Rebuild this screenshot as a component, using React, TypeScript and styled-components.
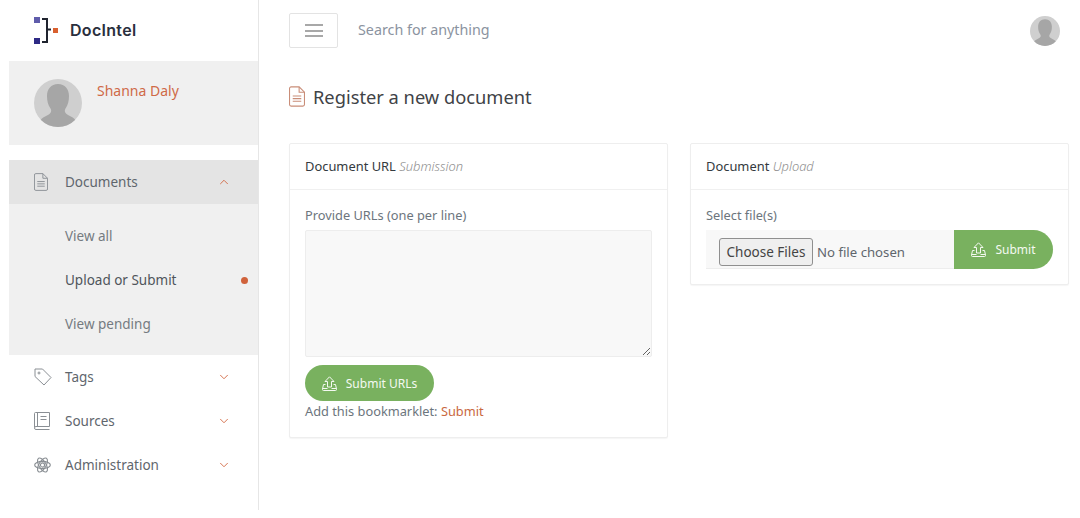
import styled, { createGlobalStyle } from 'styled-components';
import { ChevronDown, ChevronUp } from 'lucide-react';

const GlobalStyle = createGlobalStyle`
  html, body {
    margin: 0;
    background: #fff;
  }
  * {
    box-sizing: border-box;
  }
  body {
    font-family: "Noto Sans", "Open Sans", sans-serif;
    font-size: 13.5px;
    color: #6c757d;
    overflow: hidden;
  }
`;

const Page = styled.div`
  display: flex;
  width: 1080px;
  height: 518px;
`;

const Sidebar = styled.aside`
  width: 259px;
  height: 510px;
  padding-left: 9px;
  border-right: 1px solid #e6e6e6;
  flex-shrink: 0;
`;

const Brand = styled.div`
  display: flex;
  align-items: center;
  height: 61px;
  padding-left: 25px;
  gap: 12px;
`;

const BrandName = styled.span`
  margin-top: -2px;
  font-family: Inter, sans-serif;
  font-size: 16px;
  font-weight: 600;
  color: #2a2f3d;
  letter-spacing: 0.3px;
`;

const Profile = styled.div`
  display: flex;
  height: 84px;
  margin-bottom: 15px;
  padding: 18px 0 0 25px;
  gap: 15px;
  background: #f0f0f0;
`;

const ProfileName = styled.a`
  color: #cf6a47;
  font-size: 14px;
  line-height: 24px;
`;

const MenuRow = styled.div<{ $open?: boolean }>`
  display: flex;
  align-items: center;
  height: 44px;
  padding: 0 27px 0 25px;
  background: ${(p) => (p.$open ? '#e4e4e4' : 'transparent')};
  color: #5f666d;
`;

const MenuIcon = styled.span`
  display: flex;
  width: 31px;
  color: #8a8f94;
`;

const MenuLabel = styled.span`
  flex: 1;
  line-height: 20px;
`;

const SubMenu = styled.div`
  background: #f0f0f0;
  padding: 10px 0 9px;
`;

const SubItem = styled.div<{ $active?: boolean }>`
  display: flex;
  align-items: center;
  justify-content: space-between;
  height: 44px;
  padding: 0 10px 0 56px;
  color: ${(p) => (p.$active ? '#4f555b' : '#757b81')};
`;

const Dot = styled.span`
  width: 7px;
  height: 7px;
  border-radius: 50%;
  background: #d0623b;
`;

const Main = styled.main`
  flex: 1;
  min-width: 0;
  padding: 0 11px 0 30px;
`;

const Topbar = styled.div`
  display: flex;
  align-items: center;
  height: 61px;
`;

const MenuButton = styled.button`
  display: flex;
  flex-direction: column;
  align-items: center;
  justify-content: center;
  gap: 3.5px;
  width: 49px;
  height: 35px;
  margin-right: 20px;
  padding: 0;
  background: #fff;
  border: 1px solid #e3e3e3;
  border-radius: 2px;
`;

const MenuBar = styled.span`
  width: 18px;
  height: 2px;
  background: #a8a8a8;
`;

const SearchText = styled.span`
  flex: 1;
  margin-top: -3px;
  color: #8b93a0;
  font-size: 14.3px;
`;

const TopAvatar = styled.span`
  display: flex;
  margin-right: 9px;
`;

const Heading = styled.div`
  display: flex;
  align-items: center;
  gap: 8px;
  height: 36px;
  margin: 17px 0 29px;
`;

const Title = styled.h1`
  margin: 0;
  font-size: 18.3px;
  font-weight: 400;
  color: #3f4347;
`;

const Columns = styled.div`
  display: flex;
  align-items: flex-start;
  gap: 22px;
`;

const Card = styled.section<{ $width: number }>`
  width: ${(p) => p.$width}px;
  background: #fff;
  border: 1px solid #eeeeee;
  border-radius: 2px;
  box-shadow: 0 1px 1px rgba(0, 0, 0, 0.04);
`;

const CardHead = styled.div`
  height: 46px;
  padding: 0 15px;
  line-height: 45px;
  font-size: 12.9px;
  color: #343a40;
  border-bottom: 1px solid #f0f0f0;
`;

const Muted = styled.em`
  color: #8f8f8f;
  font-weight: 300;
`;

const CardBody = styled.div`
  padding: 15px 15px 0;
`;

const FieldLabel = styled.label`
  display: block;
  height: 25px;
  line-height: 20px;
  font-size: 12.8px;
  color: #6c757d;
`;

const UrlInput = styled.textarea`
  display: block;
  width: 100%;
  height: 127px;
  margin-bottom: 8px;
  background: #f8f8f8;
  border: 1px solid #ededed;
  border-radius: 2px;
`;

const PillButton = styled.button`
  display: flex;
  align-items: center;
  justify-content: center;
  gap: 9px;
  width: 129px;
  height: 36px;
  padding: 0;
  border: none;
  border-radius: 18px;
  background: #79b15f;
  color: #f4f9f1;
  font-family: inherit;
  font-size: 12px;
`;

const Hint = styled.div`
  height: 36px;
  line-height: 20px;
  font-size: 12.8px;
  color: #6c757d;
`;

const HintLink = styled.a`
  color: #c9683f;
`;

const FileRow = styled.div`
  display: flex;
  height: 39px;
  margin-bottom: 15px;
`;

const FileField = styled.div`
  display: flex;
  align-items: center;
  flex: 1;
  padding: 5px 0 0 13px;
  background: #f8f8f8;
  border-bottom: 1px solid #ededed;
  font-size: 13.2px;
  color: #5f666d;
  gap: 4px;
`;

const ChooseButton = styled.button`
  width: 94px;
  height: 28px;
  padding: 0;
  background: #efefef;
  border: 1px solid #8f8f8f;
  border-radius: 3px;
  font-family: inherit;
  font-size: 13.5px;
  color: #444;
`;

const FileSubmit = styled(PillButton)`
  width: 99px;
  height: 39px;
  border-radius: 0 20px 20px 0;
`;

const Avatar = ({ size }: { size: number }) => (
  <svg width={size} height={size} viewBox="0 0 48 48">
    <defs>
      <clipPath id={`avatar-${size}`}>
        <circle cx="24" cy="24" r="24" />
      </clipPath>
    </defs>
    <circle cx="24" cy="24" r="24" fill="#cfcfcf" />
    <path
      clipPath={`url(#avatar-${size})`}
      d="M24 5c-7 0-11 5-11 12 0 5 1 9 3.500 12.500 1 1.500 1 3.500-.5 5C13 37 8 38 6 42l2 6h32l2-6c-2-4-7-5-10-7.500-1.500-1.500-1.500-3.500-.5-5C34 26 35 22 35 17c0-7-4-12-11-12z"
      fill="#a6a6a6"
    />
  </svg>
);

const Logo = () => (
  <svg width="24" height="27" viewBox="0 0 24 27">
    <rect x="0" y="0" width="6" height="6" fill="#5f5cab" />
    <rect x="0" y="21" width="6" height="6" fill="#2e2a85" />
    <path d="M8 2h5v23H8" fill="none" stroke="#20242f" strokeWidth="2" />
    <path d="M14 12.500h3" fill="none" stroke="#20242f" strokeWidth="2" />
    <rect x="19" y="11" width="5" height="5" fill="#d9602f" />
  </svg>
);

const DocIcon = ({ color = 'currentColor', width = 14, height = 18 }: { color?: string; width?: number; height?: number }) => (
  <svg width={width} height={height} viewBox="0 0 15 19" fill="none" stroke={color} strokeWidth="1">
    <path d="M2 .5h7.500L14.500 5.500V17a1.500 1.500 0 0 1-1.500 1.500H2A1.500 1.500 0 0 1 .5 17V2A1.500 1.500 0 0 1 2 .5z" />
    <path d="M9.500.5v5h5M3.500 9h8M3.500 11.500h8M3.500 14h8" />
  </svg>
);

const TagIcon = () => (
  <svg width="18" height="19" viewBox="0 0 18 19" fill="none" stroke="currentColor" strokeWidth="1">
    <path d="M1 1h7.500l8.500 8.500-7 7.500L1 8.500z" strokeLinejoin="round" />
    <circle cx="5" cy="5" r="1" />
  </svg>
);

const BookIcon = () => (
  <svg width="16" height="18" viewBox="0 0 16 18" fill="none" stroke="currentColor" strokeWidth="1">
    <path d="M.5 15V1.500a1 1 0 0 1 1-1h14v14H2a1.500 1.500 0 0 0 0 3h13.500" />
    <path d="M3.500.5v14M6.500 4.500h6M6.500 7.500h6" />
  </svg>
);

const AtomIcon = () => (
  <svg width="17" height="18" viewBox="0 0 18 18" fill="none" stroke="currentColor" strokeWidth="1.200">
    <ellipse cx="9" cy="9" rx="8.300" ry="3.800" />
    <ellipse cx="9" cy="9" rx="8.300" ry="3.800" transform="rotate(60 9 9)" />
    <ellipse cx="9" cy="9" rx="8.300" ry="3.800" transform="rotate(120 9 9)" />
    <circle cx="9" cy="9" r="2.200" />
  </svg>
);

const UploadIcon = () => (
  <svg width="15" height="15" viewBox="0 0 15 15" fill="none" stroke="currentColor" strokeWidth="1">
    <path d="M7.500.8 3 5.500h2.500v5.500h4V5.500H12z" strokeLinejoin="round" />
    <path d="M3.500 8.500h-2l-1 4.500v.500a1 1 0 0 0 1 1h12a1 1 0 0 0 1-1V13l-1-4.500h-2M.8 12.500h4.700M9.500 12.500h4.700" />
  </svg>
);

const App = () => (
  <Page>
    <GlobalStyle />
    <Sidebar>
      <Brand>
        <Logo />
        <BrandName>DocIntel</BrandName>
      </Brand>
      <Profile>
        <Avatar size={48} />
        <ProfileName>Shanna Daly</ProfileName>
      </Profile>
      <MenuRow $open>
        <MenuIcon>
          <DocIcon />
        </MenuIcon>
        <MenuLabel>Documents</MenuLabel>
        <ChevronUp size={14} strokeWidth={1.5} color="#d0623b" />
      </MenuRow>
      <SubMenu>
        <SubItem>View all</SubItem>
        <SubItem $active>
          Upload or Submit
          <Dot />
        </SubItem>
        <SubItem>View pending</SubItem>
      </SubMenu>
      <MenuRow>
        <MenuIcon>
          <TagIcon />
        </MenuIcon>
        <MenuLabel>Tags</MenuLabel>
        <ChevronDown size={14} strokeWidth={1.5} color="#d0623b" />
      </MenuRow>
      <MenuRow>
        <MenuIcon>
          <BookIcon />
        </MenuIcon>
        <MenuLabel>Sources</MenuLabel>
        <ChevronDown size={14} strokeWidth={1.5} color="#d0623b" />
      </MenuRow>
      <MenuRow>
        <MenuIcon>
          <AtomIcon />
        </MenuIcon>
        <MenuLabel>Administration</MenuLabel>
        <ChevronDown size={14} strokeWidth={1.5} color="#d0623b" />
      </MenuRow>
    </Sidebar>
    <Main>
      <Topbar>
        <MenuButton>
          <MenuBar />
          <MenuBar />
          <MenuBar />
        </MenuButton>
        <SearchText>Search for anything</SearchText>
        <TopAvatar>
          <Avatar size={30} />
        </TopAvatar>
      </Topbar>
      <Heading>
        <DocIcon color="#c98d78" width={16} height={21} />
        <Title>Register a new document</Title>
      </Heading>
      <Columns>
        <Card $width={379}>
          <CardHead>
            Document URL <Muted>Submission</Muted>
          </CardHead>
          <CardBody>
            <FieldLabel>Provide URLs (one per line)</FieldLabel>
            <UrlInput />
            <PillButton>
              <UploadIcon />
              Submit URLs
            </PillButton>
            <Hint>
              Add this bookmarklet: <HintLink>Submit</HintLink>
            </Hint>
          </CardBody>
        </Card>
        <Card $width={379}>
          <CardHead>
            Document <Muted>Upload</Muted>
          </CardHead>
          <CardBody>
            <FieldLabel>Select file(s)</FieldLabel>
            <FileRow>
              <FileField>
                <ChooseButton>Choose Files</ChooseButton>
                No file chosen
              </FileField>
              <FileSubmit>
                <UploadIcon />
                Submit
              </FileSubmit>
            </FileRow>
          </CardBody>
        </Card>
      </Columns>
    </Main>
  </Page>
);

export default App;
